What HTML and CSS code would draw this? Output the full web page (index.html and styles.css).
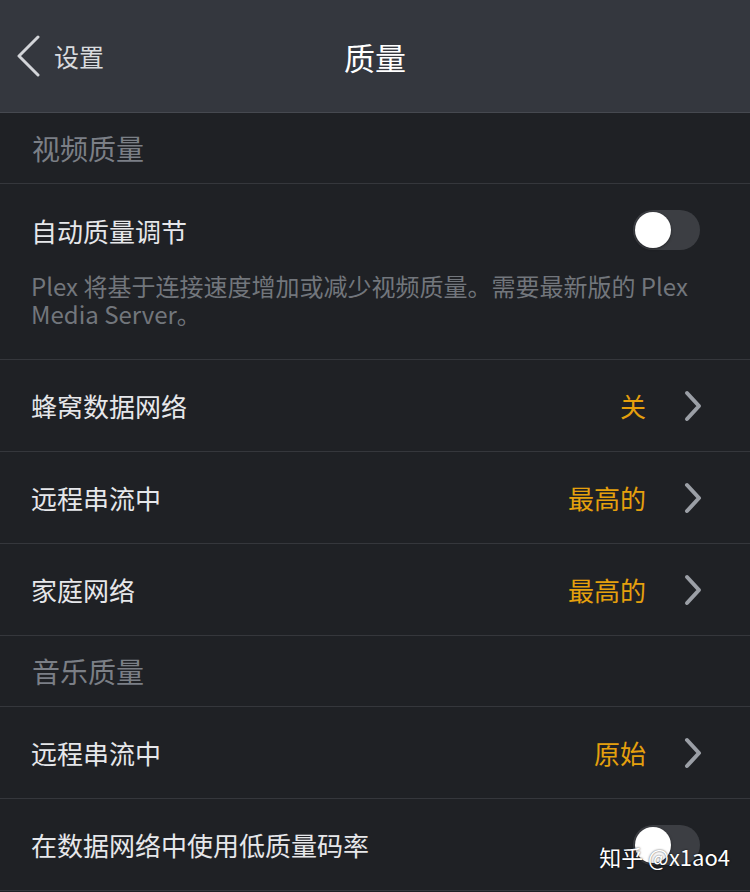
FILE: index.html
```html
<!DOCTYPE html>
<html>
<head>
	<meta charset="utf-8">
	<title>质量</title>
	<link rel="stylesheet" href="styles.css">
</head>
<body>
	<div class="page">
		<div class="topbar">
			<a class="back" href="javascript:;">
				<svg width="26" height="42" viewBox="0 0 26 42"><path d="M22 2 L3 21 L22 40" fill="none" stroke="#d3d5d9" stroke-width="3" stroke-linecap="round" stroke-linejoin="round"/></svg>
				<span>设置</span>
			</a>
			<h1>质量</h1>
			<span></span>
		</div>

		<div class="group-title">视频质量</div>
		<div class="row row-tall">
			<div class="row-main">
				<span class="label">自动质量调节</span>
				<span class="switch"><i></i></span>
			</div>
			<p class="desc">Plex 将基于连接速度增加或减少视频质量。需要最新版的 Plex Media Server。</p>
		</div>
		<div class="row">
			<span class="label">蜂窝数据网络</span>
			<span class="value">关</span>
			<span class="arrow"><svg width="18" height="32" viewBox="0 0 18 32"><path d="M3 3 L15 16 L3 29" fill="none" stroke="#9b9fa6" stroke-width="4" stroke-linecap="round" stroke-linejoin="round"/></svg></span>
		</div>
		<div class="row">
			<span class="label">远程串流中</span>
			<span class="value">最高的</span>
			<span class="arrow"><svg width="18" height="32" viewBox="0 0 18 32"><path d="M3 3 L15 16 L3 29" fill="none" stroke="#9b9fa6" stroke-width="4" stroke-linecap="round" stroke-linejoin="round"/></svg></span>
		</div>
		<div class="row">
			<span class="label">家庭网络</span>
			<span class="value">最高的</span>
			<span class="arrow"><svg width="18" height="32" viewBox="0 0 18 32"><path d="M3 3 L15 16 L3 29" fill="none" stroke="#9b9fa6" stroke-width="4" stroke-linecap="round" stroke-linejoin="round"/></svg></span>
		</div>

		<div class="group-title">音乐质量</div>
		<div class="row">
			<span class="label">远程串流中</span>
			<span class="value">原始</span>
			<span class="arrow"><svg width="18" height="32" viewBox="0 0 18 32"><path d="M3 3 L15 16 L3 29" fill="none" stroke="#9b9fa6" stroke-width="4" stroke-linecap="round" stroke-linejoin="round"/></svg></span>
		</div>
		<div class="row row-last">
			<span class="label">在数据网络中使用低质量码率</span>
			<span class="switch"><i></i></span>
		</div>

		<div class="mark">知乎 @x1ao4</div>
	</div>
</body>
</html>
```

FILE: styles.css
```css
* {
	margin: 0;
	padding: 0;
	box-sizing: border-box;
}
body {
	font-family: "Noto Sans CJK SC", "Noto Sans", sans-serif;
	background: #1f2125;
	color: #e4e5e8;
}
a {
	text-decoration: none;
	color: inherit;
}
.page {
	width: 750px;
	height: 892px;
	overflow: hidden;
	position: relative;
	background: #1f2125;
}

/* 顶部导航 */
.topbar {
	height: 113px;
	display: grid;
	grid-template-columns: 1fr auto 1fr;
	align-items: center;
	background: #34373e;
	border-bottom: 1px solid #464950;
}
.back {
	display: flex;
	align-items: center;
	gap: 12px;
	padding-left: 16px;
	color: #d9dbde;
	font-size: 25px;
}
.topbar h1 {
	font-size: 31px;
	font-weight: normal;
	color: #fff;
}

/* 分组标题 */
.group-title {
	height: 71px;
	padding-left: 32px;
	display: flex;
	align-items: center;
	font-size: 28px;
	color: #7b7f86;
	border-bottom: 1px solid #35373c;
}

/* 设置行 */
.row {
	height: 92px;
	display: flex;
	align-items: center;
	padding: 0 48px 0 31px;
	border-bottom: 1px solid #35373c;
	font-size: 26px;
}
.row-tall {
	height: 176px;
	display: block;
	padding: 26px 50px 0 31px;
}
.row-main {
	display: flex;
	align-items: center;
	height: 40px;
}
.label {
	flex: 1;
	color: #e6e7ea;
}
.value {
	color: #e5a00d;
	margin-right: 38px;
}
.arrow {
	display: flex;
	width: 18px;
}
.desc {
	margin-top: 22px;
	font-size: 24px;
	line-height: 28px;
	color: #72767c;
	padding-right: 6px;
}

/* 开关 */
.switch {
	width: 67px;
	height: 40px;
	border-radius: 20px;
	background: #3c3e43;
	position: relative;
	flex: none;
}
.switch i {
	position: absolute;
	left: 2px;
	top: 2px;
	width: 36px;
	height: 36px;
	border-radius: 50%;
	background: #fff;
	box-shadow: 0 1px 3px rgba(0, 0, 0, .4);
}
.row-last {
	padding-right: 50px;
	align-items: flex-start;
	padding-top: 26px;
}
.row-last .label {
	line-height: 40px;
}

/* 水印 */
.mark {
	position: absolute;
	right: 20px;
	bottom: 20px;
	font-size: 22px;
	color: #fff;
	text-shadow: 0 0 2px rgba(0, 0, 0, .8);
}
```
